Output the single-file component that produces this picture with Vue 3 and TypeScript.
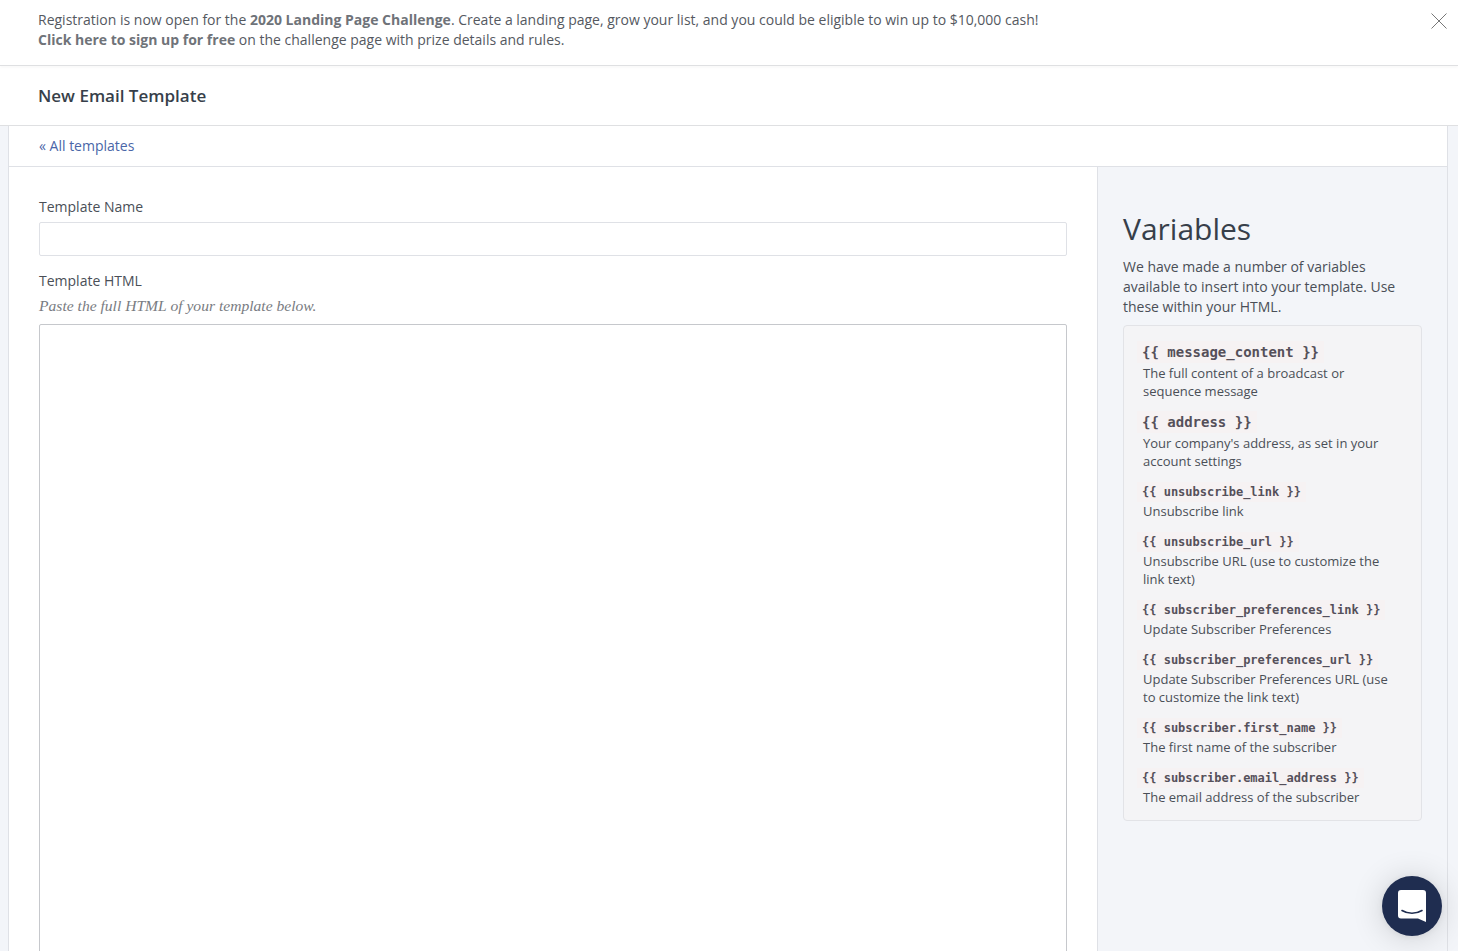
<script setup lang="ts">
interface Variable { code: string; text: string; large?: boolean }
const variables: Variable[] = [
  { code: '{{ message_content }}', text: 'The full content of a broadcast or sequence message', large: true },
  { code: '{{ address }}', text: "Your company's address, as set in your account settings", large: true },
  { code: '{{ unsubscribe_link }}', text: 'Unsubscribe link' },
  { code: '{{ unsubscribe_url }}', text: 'Unsubscribe URL (use to customize the link text)' },
  { code: '{{ subscriber_preferences_link }}', text: 'Update Subscriber Preferences' },
  { code: '{{ subscriber_preferences_url }}', text: 'Update Subscriber Preferences URL (use to customize the link text)' },
  { code: '{{ subscriber.first_name }}', text: 'The first name of the subscriber' },
  { code: '{{ subscriber.email_address }}', text: 'The email address of the subscriber' },
]
</script>

<template>
  <div class="page">
    <div class="banner">
      <p>Registration is now open for the <strong>2020 Landing Page Challenge</strong>. Create a landing page, grow your list, and you could be eligible to win up to $10,000 cash!<br /><strong>Click here to sign up for free</strong> on the challenge page with prize details and rules.</p>
      <svg class="close" width="16" height="16" viewBox="0 0 16 16"><path d="M.5.5l15 15M15.5.5l-15 15" stroke="#777" stroke-width="1" fill="none" /></svg>
    </div>
    <header class="head"><h1>New Email Template</h1></header>
    <div class="panel">
      <div class="back"><a>« All templates</a></div>
      <div class="columns">
        <main class="form">
          <label class="label">Template Name</label>
          <div class="input"></div>
          <label class="label second">Template HTML</label>
          <p class="hint">Paste the full HTML of your template below.</p>
          <div class="textarea"></div>
        </main>
        <aside class="side">
          <h2>Variables</h2>
          <p class="intro">We have made a number of variables available to insert into your template. Use these within your HTML.</p>
          <div class="box">
            <div v-for="v in variables" :key="v.code" class="var">
              <code :class="{ big: v.large }">{{ v.code }}</code>
              <span>{{ v.text }}</span>
            </div>
          </div>
        </aside>
      </div>
    </div>
    <button class="chat" aria-label="Chat">
      <svg width="28" height="32" viewBox="0 0 28 32"><path d="M3 0h22a3 3 0 0 1 3 3v29l-8-3.5H3a3 3 0 0 1-3-3V3a3 3 0 0 1 3-3z" fill="#fff" /><path d="M4 20.5c6 3.6 14 3.6 20 0" stroke="#1f2d50" stroke-width="1.6" fill="none" stroke-linecap="round" /></svg>
    </button>
  </div>
</template>

<style>
html, body { margin: 0; background: #f3f5f9; overflow: hidden; }
</style>

<style scoped>
.page { position: relative; height: 951px; overflow: hidden; font-family: "Open Sans", sans-serif; color: #4a4f57; background: #f3f5f9; }
.banner { position: relative; z-index: 1; height: 55px; padding: 10px 38px 0; background: #fff; border-bottom: 1px solid #dfe0e2; box-shadow: 0 2px 2px rgba(0, 0, 0, .025); font-size: 14px; line-height: 20px; color: #55595f; }
.banner p { margin: 0; }
.banner strong { font-weight: 700; color: #6f7379; }
.close { position: absolute; top: 13px; right: 11px; }
.head { box-sizing: border-box; height: 60px; background: #fff; border-bottom: 1px solid #dfe0e2; padding: 1px 0 0 38px; display: flex; align-items: center; }
.head h1 { margin: 0; font-size: 17px; font-weight: 600; color: #373f4a; line-height: 24px; }
.panel { margin: 0 10px 0 8px; background: #fff; border-left: 1px solid #dfe1e6; border-right: 1px solid #dfe1e6; }
.back { height: 38px; padding: 0 0 2px 30px; display: flex; align-items: center; border-bottom: 1px solid #dfe1e6; font-size: 14px; }
.back a { color: #4a66a8; }
.columns { display: flex; height: 784px; }
.form { flex: 1; padding: 30px 30px 0; min-width: 0; box-sizing: border-box; }
.label { display: block; font-size: 14px; line-height: 20px; color: #4a4f57; }
.second { margin-top: 15px; }
.input { height: 32px; margin-top: 5px; border: 1px solid #dfe1e6; border-radius: 2px; background: #fff; }
.hint { margin: 5px 0 8px; font-family: "Liberation Serif", serif; font-style: italic; font-size: 15.6px; line-height: 20px; color: #797c82; }
.textarea { height: 800px; border: 1px solid #c6c8cc; border-radius: 2px; background: #fff; }
.side { width: 350px; flex: none; box-sizing: border-box; padding: 41px 25px 0; background: #f3f5f9; border-left: 1px solid #dfe1e6; }
.side h2 { margin: 0 0 7px; font-size: 30px; font-weight: 400; line-height: 42px; color: #373f4a; }
.intro { margin: 0 0 8px; font-size: 14px; line-height: 20px; color: #4a4f57; }
.box { background: #f4f4f6; border: 1px solid #e2e3e7; border-radius: 4px; padding: 15px 19px 14px; }
.var { margin-bottom: 12px; font-size: 13px; line-height: 18px; color: #4a4f57; }
.var:first-child { margin-bottom: 11px; }
.var:last-child { margin-bottom: 0; }
.var span { display: block; }
code { display: inline-block; vertical-align: top; font-family: "DejaVu Sans Mono", monospace; font-weight: 700; font-size: 12px; line-height: 20px; color: #55505a; background: #f6f2f3; padding: 0 5px; margin-left: -6px; }
code.big { font-size: 14px; line-height: 22px; margin-bottom: 1px; }
.chat { position: absolute; left: 1382px; top: 876px; width: 60px; height: 60px; padding: 0; border: 0; border-radius: 50%; background: #1f2d50; box-shadow: 0 1px 6px rgba(0,0,0,.06), 0 2px 32px rgba(0,0,0,.16); display: flex; align-items: center; justify-content: center; }
</style>
